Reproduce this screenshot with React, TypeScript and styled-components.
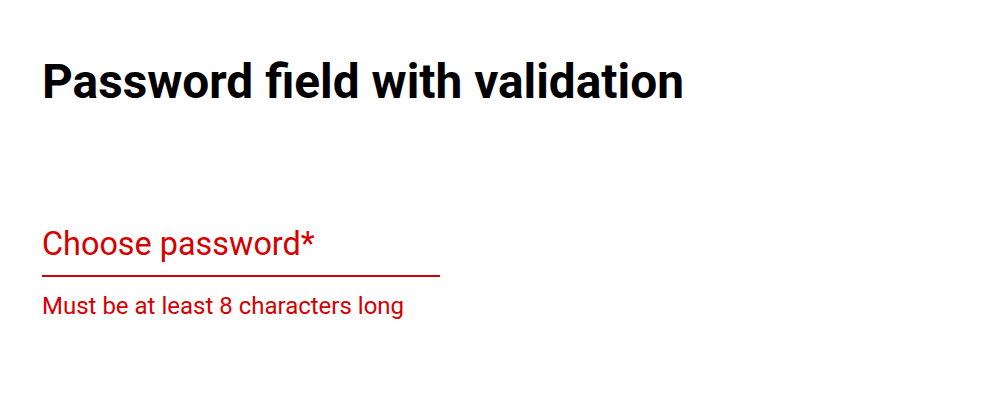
import React from "react";
import styled, { createGlobalStyle } from "styled-components";

const GlobalStyle = createGlobalStyle`
  html, body {
    margin: 0;
    padding: 0;
    background: #ffffff;
    font-family: Roboto, "Liberation Sans", sans-serif;
  }
`;

const Page = styled.main`
  display: flex;
  flex-direction: column;
  padding: 50px 42px 0;
`;

const Title = styled.h1`
  margin: 0;
  font-size: 47.8px;
  font-weight: 700;
  line-height: 64px;
  color: #000000;
`;

const Field = styled.div`
  display: flex;
  flex-direction: column;
  width: 398px;
  margin-top: 110px;
`;

const Label = styled.label<{ error?: boolean }>`
  font-size: 32.4px;
  line-height: 40px;
  color: ${(p) => (p.error ? "#d50000" : "#555")};
`;

const Input = styled.input<{ error?: boolean }>`
  border: none;
  border-bottom: 2px solid ${(p) => (p.error ? "#d50000" : "#999")};
  outline: none;
  height: 11px;
  padding: 0;
  font-size: 22px;
  background: transparent;
`;

const Helper = styled.span<{ error?: boolean }>`
  margin-top: 15px;
  font-size: 24px;
  line-height: 28px;
  color: ${(p) => (p.error ? "#d50000" : "#666")};
`;

export default function App() {
  return (
    <>
      <GlobalStyle />
      <Page>
        <Title>Password field with validation</Title>
        <Field>
          <Label htmlFor="pw" error>
            Choose password*
          </Label>
          <Input id="pw" type="password" error />
          <Helper error>Must be at least 8 characters long</Helper>
        </Field>
      </Page>
    </>
  );
}
